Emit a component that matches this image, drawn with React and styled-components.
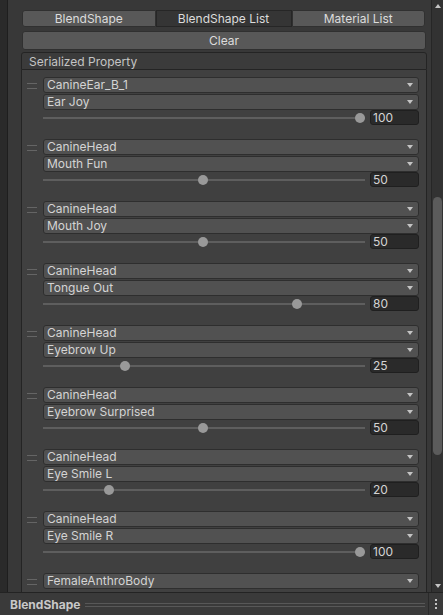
import React from "react";
import styled, { createGlobalStyle } from "styled-components";

const items = [
  { mesh: "CanineEar_B_1", shape: "Ear Joy", value: 100 },
  { mesh: "CanineHead", shape: "Mouth Fun", value: 50 },
  { mesh: "CanineHead", shape: "Mouth Joy", value: 50 },
  { mesh: "CanineHead", shape: "Tongue Out", value: 80 },
  { mesh: "CanineHead", shape: "Eyebrow Up", value: 25 },
  { mesh: "CanineHead", shape: "Eyebrow Surprised", value: 50 },
  { mesh: "CanineHead", shape: "Eye Smile L", value: 20 },
  { mesh: "CanineHead", shape: "Eye Smile R", value: 100 },
  // scrolled out below the fold, only the mesh row shows
  { mesh: "FemaleAnthroBody" }
];

const tabs = ["BlendShape", "BlendShape List", "Material List"];

export default () => {
  return (
    <Window>
      <Global />
      <Body>
        <Gutter />
        <Inspector>
          <Tabs>
            {tabs.map((t, i) => (
              <Tab key={t} selected={i === 1}>
                {t}
              </Tab>
            ))}
          </Tabs>
          <ClearButton>Clear</ClearButton>
          <ListHeader>Serialized Property</ListHeader>
          <ListBody>
            {items.map((it, i) => (
              <Item key={i}>
                <Handle />
                <Fields>
                  <Dropdown>{it.mesh}</Dropdown>
                  {it.shape && <Dropdown>{it.shape}</Dropdown>}
                  {it.value != null && (
                    <SliderRow>
                      <Slider>
                        <Track />
                        <Knob style={{ left: 3 + it.value * 3.14 - 5 }} />
                      </Slider>
                      <NumberField>{it.value}</NumberField>
                    </SliderRow>
                  )}
                </Fields>
              </Item>
            ))}
          </ListBody>
        </Inspector>
        <Scrollbar>
          <ScrollArrow up />
          <ScrollTrack>
            <Thumb />
          </ScrollTrack>
          <ScrollArrow />
        </Scrollbar>
      </Body>
      <BottomBar>
        <BarTitle>BlendShape</BarTitle>
        <BarRule />
        <Kebab>
          <i />
          <i />
          <i />
        </Kebab>
      </BottomBar>
    </Window>
  );
};

const Global = createGlobalStyle`
  html, body {
    margin: 0;
    padding: 0;
    background: #383838;
  }
`;

const Window = styled.div`
  width: 443px;
  height: 615px;
  display: flex;
  flex-direction: column;
  background: #383838;
  font-family: Inter, "Noto Sans", sans-serif;
  font-size: 12px;
  color: #d2d2d2;
  overflow: hidden;
`;

const Body = styled.div`
  display: flex;
  flex: 0 0 592px;
  height: 592px;
  border-bottom: 1px solid #232323;
  overflow: hidden;
`;

const Gutter = styled.div`
  width: 7px;
  background: #2a2a2a;
  border-right: 1px solid #1e1e1e;
`;

const Inspector = styled.div`
  flex: 1;
  display: flex;
  flex-direction: column;
  padding: 10px 4px 0 13px;
  min-width: 0;
  min-height: 0;
  overflow: hidden;
`;

const Tabs = styled.div`
  display: flex;
  flex: 0 0 17px;
  margin: 0 2px 0 1px;
`;

const Tab = styled.div`
  flex: ${(p) => (p.selected ? "0 0 136px" : "1")};
  display: flex;
  align-items: center;
  justify-content: center;
  box-sizing: border-box;
  background: ${(p) => (p.selected ? "#353535" : "#585858")};
  border: 1px solid ${(p) => (p.selected ? "#262626" : "#303030")};
  color: #dcdcdc;
  line-height: 14px;

  &:first-child {
    border-radius: 3px 0 0 3px;
  }
  &:last-child {
    border-radius: 0 3px 3px 0;
  }
`;

const ClearButton = styled.div`
  margin: 4px 1px 0 1px;
  flex: 0 0 19px;
  box-sizing: border-box;
  display: flex;
  align-items: center;
  justify-content: center;
  background: #585858;
  border: 1px solid #303030;
  border-radius: 3px;
  color: #dcdcdc;
`;

const ListHeader = styled.div`
  margin-top: 2px;
  flex: 0 0 18px;
  box-sizing: border-box;
  display: flex;
  align-items: center;
  padding-left: 7px;
  background: #3b3b3b;
  border: 1px solid #242424;
  border-radius: 3px 3px 0 0;
  color: #c4c4c4;
`;

const ListBody = styled.div`
  flex: 1;
  min-height: 0;
  overflow: hidden;
  background: #404040;
  border-left: 1px solid #242424;
  border-right: 1px solid #242424;
  padding: 7px 7px 0 5px;
`;

const Item = styled.div`
  display: grid;
  grid-template-columns: 10px 1fr;
  column-gap: 6px;
  margin-bottom: 14px;
`;

const Handle = styled.div`
  height: 4px;
  margin-top: 6px;
  border-top: 1px solid #656565;
  border-bottom: 1px solid #656565;
`;

const Fields = styled.div`
  display: flex;
  flex-direction: column;
  gap: 1px;
`;

const Dropdown = styled.div`
  position: relative;
  height: 16px;
  box-sizing: border-box;
  padding: 0 16px 0 3px;
  background: #515151;
  border: 1px solid #2e2e2e;
  border-radius: 3px;
  line-height: 14px;
  color: #d4d4d4;
  white-space: nowrap;

  &:after {
    content: "";
    position: absolute;
    right: 5px;
    top: 5px;
    border-left: 3.5px solid transparent;
    border-right: 3.5px solid transparent;
    border-top: 4px solid #c4c4c4;
  }
`;

const SliderRow = styled.div`
  display: flex;
  gap: 5px;
  height: 15px;
  margin-top: -1px;
`;

const Slider = styled.div`
  position: relative;
  flex: 1;
  display: flex;
  align-items: center;
`;

const Track = styled.div`
  flex: 1;
  height: 2px;
  margin-top: 1px;
  background: #5e5e5e;
`;

const Knob = styled.div`
  position: absolute;
  top: 3px;
  width: 10px;
  height: 10px;
  border-radius: 50%;
  background: #999999;
`;

const NumberField = styled.div`
  width: 49px;
  box-sizing: border-box;
  background: #2a2a2a;
  border: 1px solid #1f1f1f;
  border-radius: 3px;
  padding-left: 2px;
  line-height: 13px;
  color: #d4d4d4;
`;

const Scrollbar = styled.div`
  width: 11px;
  border-left: 1px solid #262626;
  background: #323232;
  display: flex;
  flex-direction: column;
`;

const ScrollArrow = styled.div`
  height: 12px;
  display: flex;
  align-items: center;
  justify-content: center;

  &:before {
    content: "";
    border-left: 3.5px solid transparent;
    border-right: 3.5px solid transparent;
    ${(p) =>
      p.up
        ? "border-bottom: 4px solid #c4c4c4;"
        : "border-top: 4px solid #c4c4c4;"}
  }
`;

const ScrollTrack = styled.div`
  flex: 1;
  display: flex;
  flex-direction: column;
  padding: 0 1px;
`;

const Thumb = styled.div`
  margin-top: 185px;
  height: 258px;
  border-radius: 5px;
  background: #5b5b5b;
`;

const BottomBar = styled.div`
  flex: 1;
  display: flex;
  align-items: center;
  background: #3a3a3a;
  padding-left: 10px;
`;

const BarTitle = styled.div`
  font-weight: 700;
  color: #c8c8c8;
`;

const BarRule = styled.div`
  flex: 1;
  height: 2px;
  margin: 1px 3px 0 5px;
  border-top: 1px solid #585858;
  border-bottom: 1px solid #585858;
`;

const Kebab = styled.div`
  width: 14px;
  align-self: stretch;
  border-left: 1px solid #2a2a2a;
  display: flex;
  flex-direction: column;
  align-items: center;
  justify-content: center;
  gap: 2px;

  i {
    width: 2px;
    height: 2px;
    background: #c4c4c4;
  }
`;
